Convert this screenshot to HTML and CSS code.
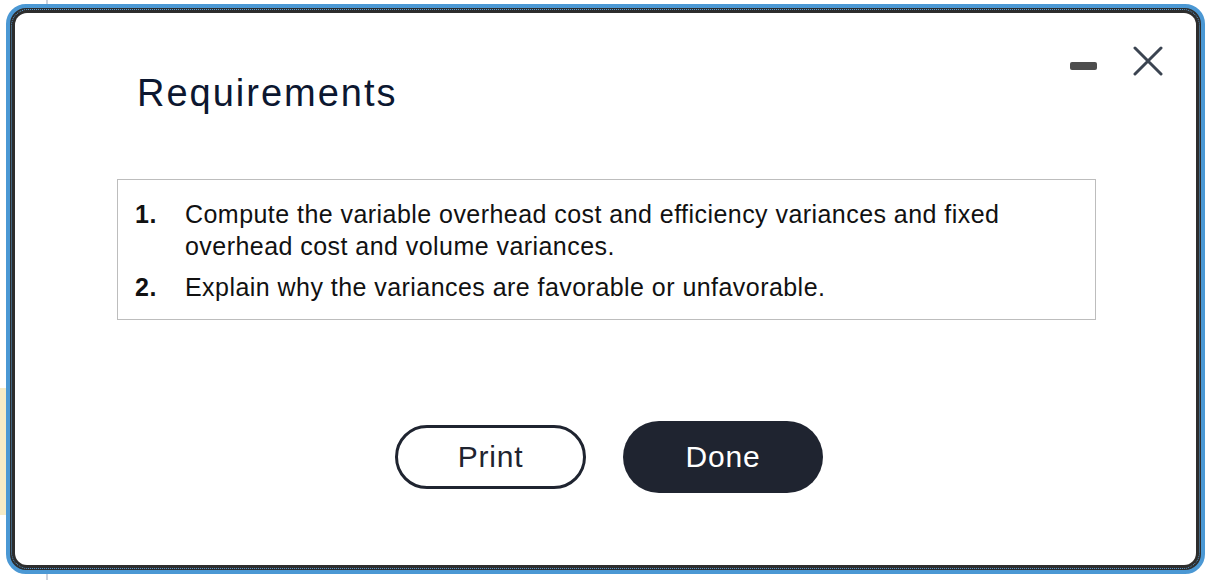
FILE: index.html
```html
<!DOCTYPE html>
<html lang="en">
<head>
<meta charset="utf-8">
<title>Requirements</title>
<link rel="stylesheet" href="styles.css">
</head>
<body>
<div class="page-strip"></div>
<div class="page-rule"></div>
<div class="modal">
  <div class="modal-frame">
    <div class="modal-body">
      <div class="window-controls">
        <button class="ctrl ctrl-min" aria-label="Minimize"><span class="min-bar"></span></button>
        <button class="ctrl ctrl-close" aria-label="Close">
          <svg width="32" height="30" viewBox="0 0 32 30"><path d="M3 2 L29 28 M29 2 L3 28" stroke="#3b4451" stroke-width="3" stroke-linecap="round" fill="none"/></svg>
        </button>
      </div>
      <h1 class="title">Requirements</h1>
      <ol class="req-list">
        <li><span class="num">1.</span><span class="txt">Compute the variable overhead cost and efficiency variances and fixed overhead cost and volume variances.</span></li>
        <li><span class="num">2.</span><span class="txt">Explain why the variances are favorable or unfavorable.</span></li>
      </ol>
      <div class="actions">
        <button class="btn btn-print">Print</button>
        <button class="btn btn-done">Done</button>
      </div>
    </div>
  </div>
</div>
</body>
</html>
```
FILE: styles.css
```css
html, body {
  margin: 0;
  padding: 0;
  background: #ffffff;
}
body {
  width: 1210px;
  height: 580px;
  position: relative;
  overflow: hidden;
  font-family: "Liberation Sans", Arial, Helvetica, sans-serif;
}
.page-strip {
  position: absolute;
  left: 0;
  top: 388px;
  width: 8px;
  height: 127px;
  background: #f6ebc6;
}
.page-rule {
  position: absolute;
  left: 46px;
  top: 0;
  width: 2px;
  height: 580px;
  background: #cdd3de;
}
.modal {
  position: relative;
  margin: 4px 0 0 6px;
  width: 1199px;
  height: 570px;
  box-sizing: border-box;
  border: 4px solid #4b98d4;
  border-radius: 20px;
  background: #2d2d2d;
  padding: 1px;
}
.modal-frame {
  box-sizing: border-box;
  height: 100%;
  border: 1px dotted #5b9fd6;
  border-radius: 17px;
  background: #2d2d2d;
  padding: 3px;
}
.modal-body {
  position: relative;
  box-sizing: border-box;
  height: 100%;
  background: #ffffff;
  border-radius: 12px;
  padding: 60px 100px 0 102px;
  display: flex;
  flex-direction: column;
}
.window-controls {
  position: absolute;
  top: 33px;
  right: 32px;
  display: flex;
  align-items: center;
  gap: 35px;
}
.ctrl {
  border: 0;
  background: none;
  padding: 0;
  margin: 0;
  display: flex;
  align-items: center;
  justify-content: center;
}
.ctrl-min {
  padding-top: 10px;
}
.min-bar {
  display: block;
  width: 27px;
  height: 8px;
  border-radius: 2px;
  background: #4d4d4d;
}
.title {
  margin: 0 0 0 20px;
  font-size: 38px;
  line-height: 41px;
  font-weight: 400;
  color: #0c1730;
  letter-spacing: 2px;
}
.req-list {
  list-style: none;
  margin: 65px 0 0 0;
  padding: 18px 20px 16px 17px;
  border: 1px solid #bdbdbd;
  display: flex;
  flex-direction: column;
  gap: 9px;
}
.req-list li {
  display: flex;
  font-size: 25px;
  line-height: 32px;
  color: #111111;
  letter-spacing: 0.45px;
}
.num {
  flex: 0 0 50px;
  font-weight: 700;
  letter-spacing: 0.5px;
}
.txt {
  flex: 1;
}
.actions {
  margin-top: 101px;
  display: flex;
  justify-content: center;
  align-items: center;
  gap: 37px;
  padding-left: 5px;
}
.btn {
  font-family: "Liberation Sans", Arial, Helvetica, sans-serif;
  font-size: 30px;
  letter-spacing: 0.8px;
  border-radius: 40px;
  box-sizing: border-box;
  cursor: pointer;
}
.btn-print {
  width: 191px;
  height: 64px;
  background: #ffffff;
  color: #1f2430;
  border: 3px solid #1f2430;
}
.btn-done {
  width: 200px;
  height: 72px;
  background: #1f2430;
  color: #ffffff;
  border: 0;
}
```
